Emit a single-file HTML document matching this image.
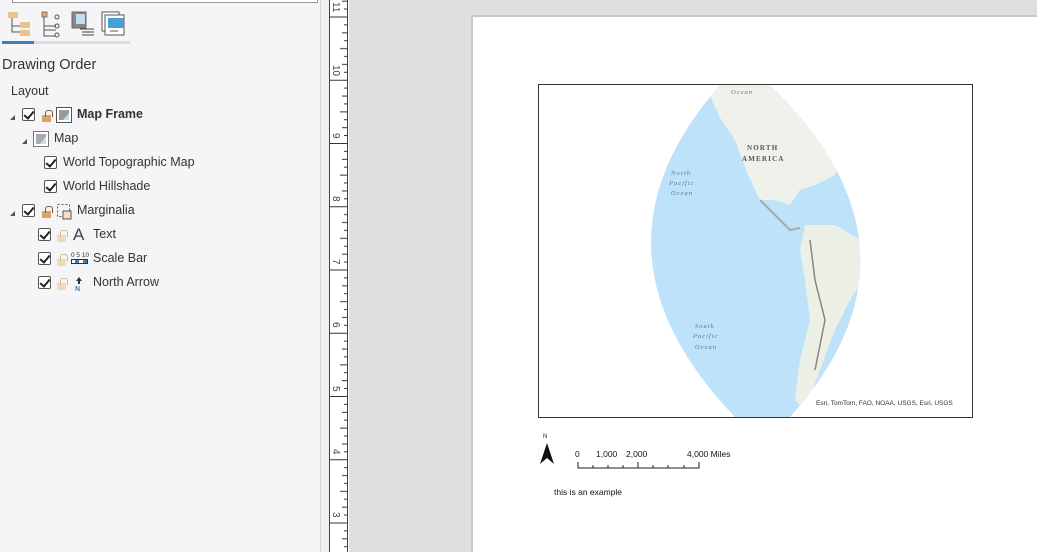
<!DOCTYPE html>
<html><head><meta charset="utf-8"><style>
*{margin:0;padding:0;box-sizing:border-box}
html,body{width:1037px;height:552px;overflow:hidden}
body{background:#dfdee0;font-family:"Liberation Sans",sans-serif;position:relative}
#left{position:absolute;left:0;top:0;width:320px;height:552px;background:#f5f5f7}
#strip{position:absolute;left:320px;top:0;width:9px;height:552px;background:#f0f0f2;border-left:1px solid #d6d6d8}
.t{position:absolute;font-size:12.5px;color:#333;white-space:nowrap}
.cb{position:absolute;width:13px;height:13px;border:1px solid #555;background:#fff;border-radius:2px}
.cb::after{content:"";position:absolute;left:3px;top:0px;width:4px;height:8px;border-right:2px solid #222;border-bottom:2px solid #222;transform:rotate(40deg)}
.tri{position:absolute;width:0;height:0;border-left:5px solid transparent;border-bottom:5px solid #555}
.lock{position:absolute;width:9px;height:7px;background:#d9a46a}
.lock::before{content:"";position:absolute;left:3px;top:-5px;width:6px;height:6px;border:1.5px solid #7a5a3a;border-bottom:none;border-radius:3px 3px 0 0}
.lock.f{background:#f0d9b8}.lock.f::before{border-color:#d4b48c}
#page{position:absolute;left:471px;top:15px;width:566px;height:537px;background:#fff;border-left:2px solid #c8c8ca;border-top:2px solid #c8c8ca}
</style></head><body>
<div id="left">
<div style="position:absolute;left:12px;top:-1px;width:306px;height:4px;border:1px solid #999;border-top:none;background:#fff"></div>
<svg style="position:absolute;left:0;top:8px" width="135" height="40">
<rect x="8" y="4" width="10" height="6" fill="#e8c48e"/><path d="M12 10V24H20M12 18H20" stroke="#555" fill="none"/><rect x="20" y="14" width="10" height="6" fill="#e8c48e"/><rect x="20" y="22" width="10" height="6" fill="#e8c48e"/>
<rect x="42" y="4" width="5" height="5" fill="#e0a878" stroke="#555" stroke-width=".7"/><path d="M44 9V28H56M44 18H56M44 22H56" stroke="#555" fill="none"/><circle cx="57" cy="9" r="2" fill="none" stroke="#555"/><circle cx="57" cy="18" r="2" fill="none" stroke="#555"/><circle cx="57" cy="27" r="2" fill="none" stroke="#555"/>
<rect x="72" y="4" width="14" height="16" fill="#888" stroke="#666"/><rect x="76" y="6" width="9" height="10" fill="#bfe0f2"/><path d="M80 21H94M82 24H94M82 27H94" stroke="#444"/>
<rect x="102" y="4" width="17" height="19" fill="#fff" stroke="#555"/><rect x="105" y="7" width="19" height="20" fill="#fff" stroke="#555"/><rect x="108" y="10" width="16" height="10" fill="#4a9ed8"/><path d="M110 23H118" stroke="#555"/>
</svg>
<div style="position:absolute;left:2px;top:41px;width:128px;height:3px;background:#dedee0"></div>
<div style="position:absolute;left:2px;top:41px;width:32px;height:3px;background:#3f7fb4"></div>
<div class="t" style="left:2px;top:57px;font-size:14.5px;color:#333">Drawing Order</div>
<div class="t" style="left:11px;top:84px">Layout</div>
<div class="tri" style="left:10px;top:115px"></div><div class="cb" style="left:22px;top:108px"></div><div class="lock" style="left:42px;top:115px"></div>
<svg style="position:absolute;left:56px;top:107px" width="16" height="16"><rect x=".5" y=".5" width="15" height="15" fill="#fff" stroke="#555"/><rect x="3" y="3" width="10" height="10" fill="#999"/><path d="M7 13L13 6V13Z" fill="#bfe0f2"/></svg>
<div class="t" style="left:77px;top:107px;font-weight:bold">Map Frame</div>
<div class="tri" style="left:22px;top:139px"></div>
<svg style="position:absolute;left:33px;top:131px" width="16" height="16"><rect x=".5" y=".5" width="15" height="15" fill="#fff" stroke="#777"/><rect x="3" y="3" width="10" height="10" fill="#aaa"/><path d="M7 13L13 5V13Z" fill="#bfe0f2"/></svg>
<div class="t" style="left:54px;top:131px">Map</div>
<div class="cb" style="left:44px;top:156px"></div><div class="t" style="left:63px;top:155px">World Topographic Map</div>
<div class="cb" style="left:44px;top:180px"></div><div class="t" style="left:63px;top:179px">World Hillshade</div>
<div class="tri" style="left:10px;top:211px"></div><div class="cb" style="left:22px;top:204px"></div><div class="lock" style="left:42px;top:211px"></div>
<svg style="position:absolute;left:56px;top:203px" width="16" height="17"><rect x="1.5" y="1.5" width="12" height="12" fill="none" stroke="#555" stroke-dasharray="2 2"/><rect x="7" y="8" width="8" height="8" fill="#f3e0c0" stroke="#555"/></svg>
<div class="t" style="left:77px;top:203px">Marginalia</div>
<div class="cb" style="left:38px;top:228px"></div><div class="lock f" style="left:57px;top:235px"></div><div class="t" style="left:73px;top:225px;font-size:17px;color:#444">A</div><div class="t" style="left:93px;top:227px">Text</div>
<div class="cb" style="left:38px;top:252px"></div><div class="lock f" style="left:57px;top:259px"></div>
<svg style="position:absolute;left:71px;top:251px" width="18" height="14"><text x="0" y="6" font-size="6.5" font-family="Liberation Sans" fill="#333">0 5 10</text><rect x=".5" y="8.5" width="16" height="4" fill="#fff" stroke="#333"/><rect x="4" y="9" width="4" height="3" fill="#3f7fb4"/><rect x="12" y="9" width="4" height="3" fill="#3f7fb4"/></svg>
<div class="t" style="left:93px;top:251px">Scale Bar</div>
<div class="cb" style="left:38px;top:276px"></div><div class="lock f" style="left:57px;top:283px"></div>
<svg style="position:absolute;left:74px;top:276px" width="10" height="16"><path d="M5 1L2 5H4V8H6V5H8Z" fill="#333"/><text x="1" y="15" font-size="7" font-weight="bold" font-family="Liberation Sans" fill="#3f7fb4">N</text></svg>
<div class="t" style="left:93px;top:275px">North Arrow</div>
</div>
<div id="strip"></div>
<svg style="position:absolute;left:329px;top:0" width="20" height="552">
<defs><pattern id="tp" patternUnits="userSpaceOnUse" x="0" y="16.5" width="20" height="63.25">
<g stroke="#333" stroke-width="1">
<path d="M1 0.5H19"/>
<path d="M15 8.4H19M13 16.3H19M15 24.2H19M11 32.1H19M15 40H19M13 47.9H19M15 55.8H19"/>
</g></pattern></defs>
<rect x="0" y="0" width="20" height="552" fill="#fff"/>
<rect x="0" y="0" width="20" height="552" fill="url(#tp)"/>
<path d="M0.5 0V552M18.5 0V552" stroke="#444"/>
<g font-family="Liberation Sans" font-size="10" fill="#444">
<text transform="translate(4,2) rotate(90)">11</text><text transform="translate(4,65) rotate(90)">10</text><text transform="translate(4,133) rotate(90)">9</text><text transform="translate(4,196) rotate(90)">8</text><text transform="translate(4,259) rotate(90)">7</text><text transform="translate(4,322) rotate(90)">6</text><text transform="translate(4,386) rotate(90)">5</text><text transform="translate(4,449) rotate(90)">4</text><text transform="translate(4,512) rotate(90)">3</text>
</g>
</svg>
<div id="page"></div>
<svg style="position:absolute;left:0;top:0" width="1037" height="552">
<rect x="538.5" y="84.5" width="434" height="333" fill="#fff" stroke="#333"/>
<defs><clipPath id="lens"><path d="M720 85 Q575 250 735 417 L790 417 Q940 250 770 85 Z"/></clipPath></defs>
<g clip-path="url(#lens)">
<rect x="600" y="85" width="330" height="332" fill="#bde2fa"/>
<path d="M705 85 L790 85 L830 110 L845 140 L835 175 L815 185 L800 190 L790 205 L775 200 L760 200 L748 175 L735 140 L720 118 L712 100Z" fill="#eef2ea"/>
<path d="M805 225 L835 225 L860 240 L870 270 L850 300 L835 330 L820 370 L805 410 L795 400 L800 360 L810 320 L805 280 L800 250Z" fill="#ecf0e6"/>
<path d="M760 200 L790 230 L800 228" stroke="#aaa" fill="none" stroke-width="2"/>
<path d="M810 240 L815 280 L825 320 L815 370" stroke="#8a8580" fill="none" stroke-width="1.5"/>
</g>
<rect x="538.5" y="84.5" width="434" height="333" fill="none" stroke="#333"/>
<g font-family="Liberation Serif" font-size="6.5" fill="#5a7a90" font-style="italic" letter-spacing="1">
<text x="731" y="94">Ocean</text><text x="671" y="175">North</text><text x="669" y="185">Pacific</text><text x="671" y="195">Ocean</text>
<text x="695" y="328">South</text><text x="693" y="338">Pacific</text><text x="695" y="349">Ocean</text></g>
<g font-family="Liberation Serif" font-size="7" fill="#555" font-weight="bold" letter-spacing="1.2"><text x="747" y="150">NORTH</text><text x="742" y="161">AMERICA</text></g>
<text x="816" y="405" font-family="Liberation Sans" font-size="6.5" fill="#333">Esri, TomTom, FAO, NOAA, USGS, Esri, USGS</text>
<text x="543" y="438" font-family="Liberation Sans" font-size="6" fill="#222">N</text>
<path d="M547 443 L554 464 L547 458 L540 464Z" fill="#111"/>
<g font-family="Liberation Sans" font-size="8.5" fill="#111"><text x="575" y="457">0</text><text x="596" y="457">1,000</text><text x="626" y="457">2,000</text><text x="687" y="457">4,000 Miles</text>
<text x="554" y="495">this is an example</text></g>
<g stroke="#222" fill="none"><path d="M578 462V468H699V462"/><path d="M593 465V468M608 465V468M623 465V468M638 462V468M653 465V468M668 465V468M684 465V468"/></g>
</svg>
</body></html>
